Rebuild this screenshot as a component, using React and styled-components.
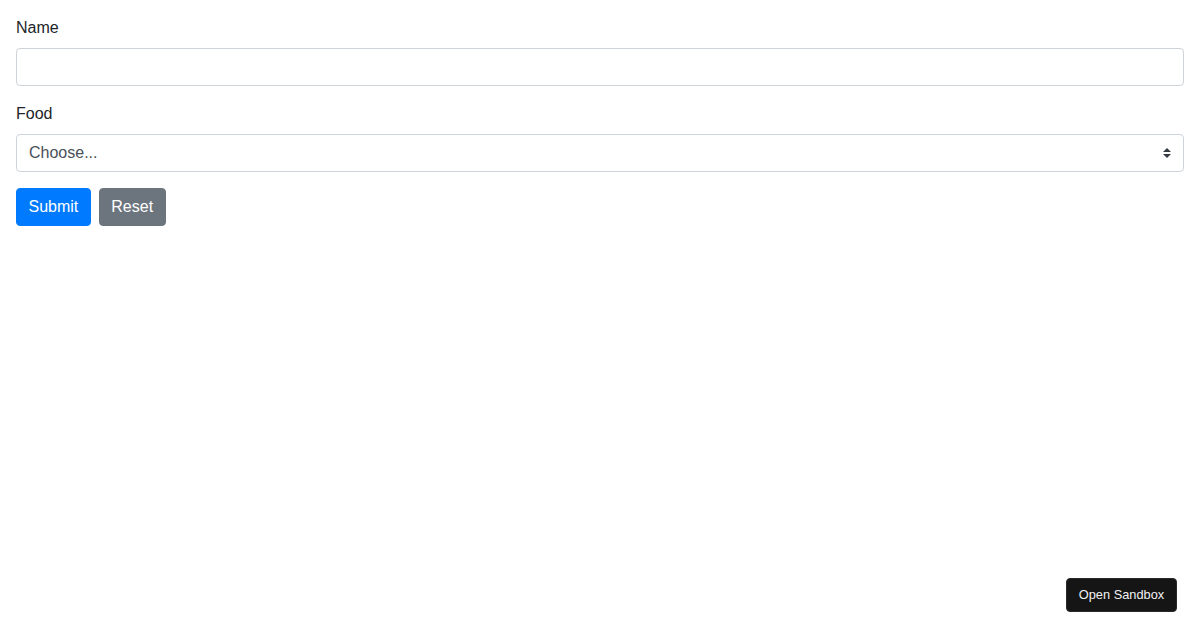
import React from "react";
import styled, { createGlobalStyle } from "styled-components";

const GlobalStyle = createGlobalStyle`
    * {
        box-sizing: border-box;
    }
    body {
        margin: 0;
        background: #fff;
        color: #212529;
        font-family: "Liberation Sans", Arial, sans-serif;
        font-size: 16px;
        line-height: 1.5;
    }
`;

const caret =
    "url(\"data:image/svg+xml,%3csvg xmlns='http://www.w3.org/2000/svg' width='4' height='5' viewBox='0 0 4 5'%3e%3cpath fill='%23343a40' d='M2 0L0 2h4zm0 5L0 3h4z'/%3e%3c/svg%3e\")";

const App = () => {
    return (
        <>
            <GlobalStyle />
            <Wrapper>
                <form onSubmit={(e) => e.preventDefault()}>
                    <Group>
                        <Label htmlFor="name">Name</Label>
                        <Input id="name" type="text" name="name" />
                    </Group>
                    <Group>
                        <Label htmlFor="food">Food</Label>
                        <Select id="food" name="food" defaultValue="">
                            <option value="">Choose...</option>
                            <option value="pizza">Pizza</option>
                            <option value="burger">Burger</option>
                            <option value="sushi">Sushi</option>
                        </Select>
                    </Group>
                    <Actions>
                        <Button type="submit" variant="primary">
                            Submit
                        </Button>
                        <Button type="reset" variant="secondary">
                            Reset
                        </Button>
                    </Actions>
                </form>
            </Wrapper>
            <SandboxButton>Open Sandbox</SandboxButton>
        </>
    );
};

const Wrapper = styled.main`
    padding: 16px;
`;

const Group = styled.div`
    margin-bottom: 16px;
`;

const Label = styled.label`
    display: block;
    margin-bottom: 8px;
    line-height: 24px;
`;

const fieldBase = `
    display: block;
    width: 100%;
    height: 38px;
    padding: 6px 12px;
    font-family: "Liberation Sans", Arial, sans-serif;
    font-size: 16px;
    line-height: 24px;
    color: #495057;
    background-color: #fff;
    border: 1px solid #ced4da;
    border-radius: 4px;
    outline: none;
`;

const Input = styled.input`
    ${fieldBase}
`;

const Select = styled.select`
    ${fieldBase}
    padding-right: 28px;
    appearance: none;
    background: #fff ${caret} no-repeat right 12px center / 8px 10px;
`;

const Actions = styled.div`
    display: flex;
    gap: 8px;
`;

const Button = styled.button`
    height: 38px;
    padding: 6px 11.5px;
    font-family: "Liberation Sans", Arial, sans-serif;
    font-size: 16px;
    line-height: 24px;
    color: #fff;
    border: 1px solid
        ${(props) => (props.variant === "primary" ? "#007bff" : "#6c757d")};
    background: ${(props) =>
        props.variant === "primary" ? "#007bff" : "#6c757d"};
    border-radius: 4px;
    cursor: pointer;
`;

const SandboxButton = styled.button`
    position: fixed;
    right: 23px;
    bottom: 18px;
    height: 34px;
    width: 111px;
    padding: 0 0 2px;
    font-family: "Liberation Sans", Arial, sans-serif;
    font-size: 12.8px;
    color: #f2f2f2;
    background: #151515;
    border: 1px solid #2a2a2a;
    border-radius: 4px;
`;

export default App;
